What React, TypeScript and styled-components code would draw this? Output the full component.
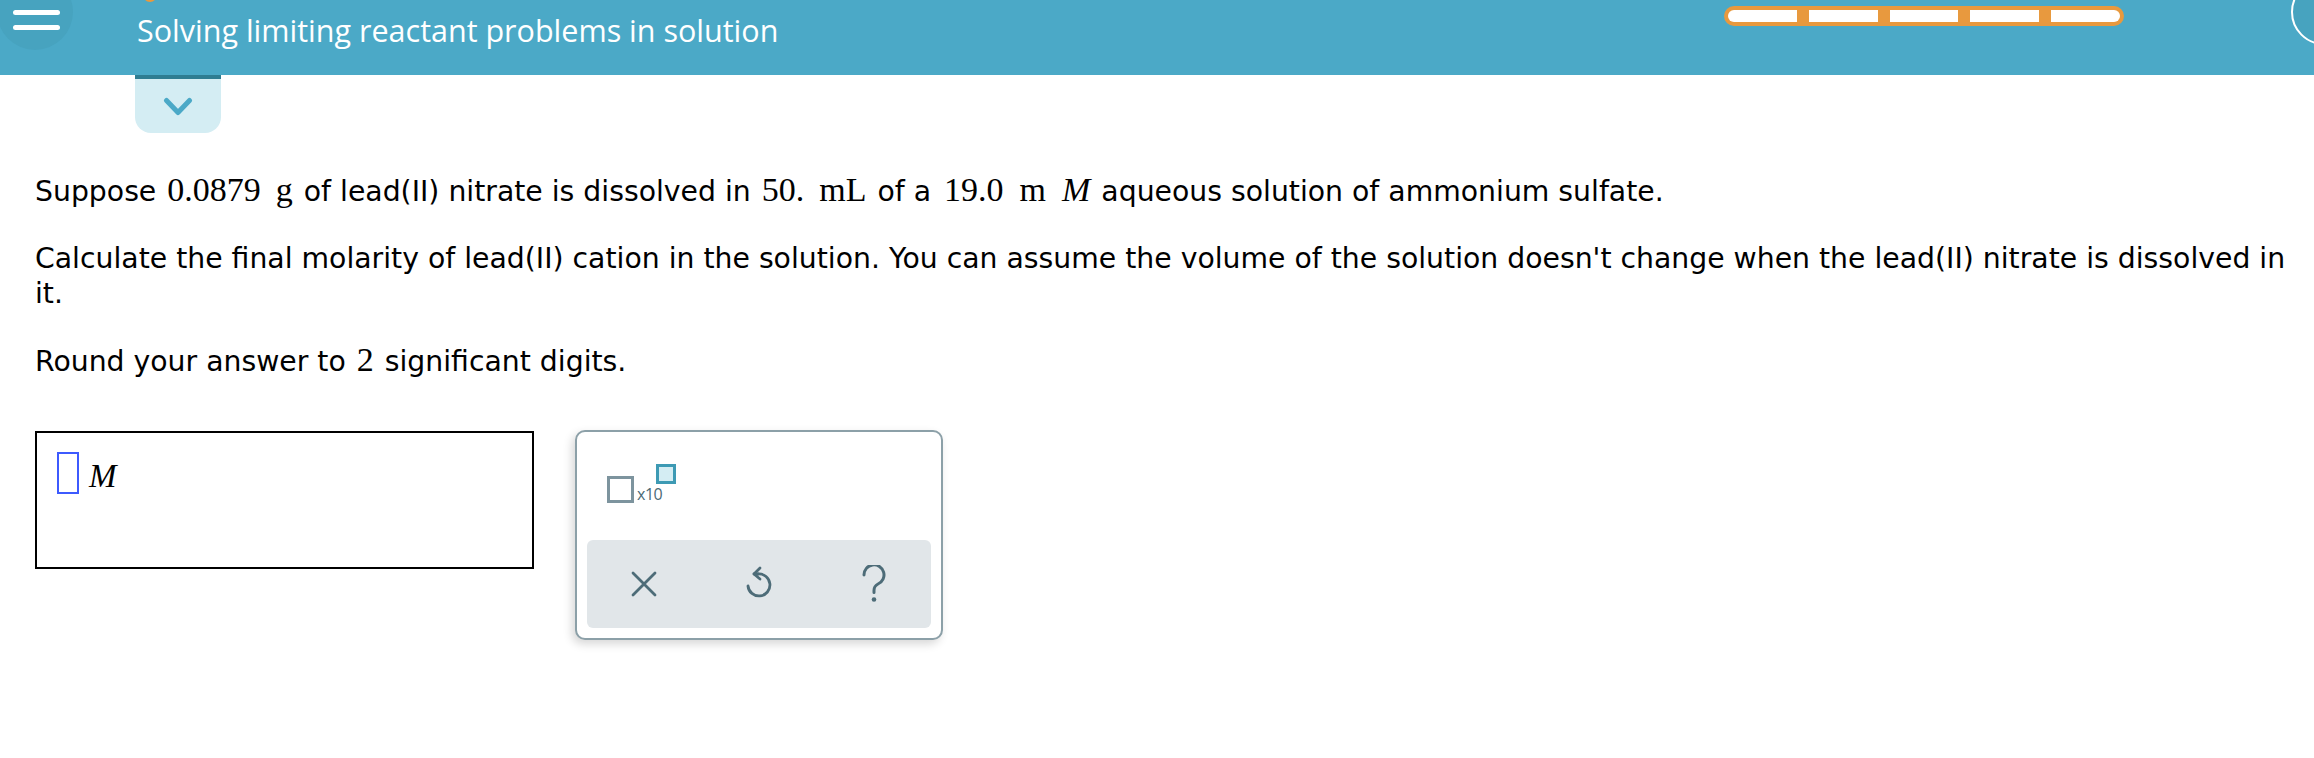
import React from 'react';
import styled, { createGlobalStyle } from 'styled-components';

const GlobalStyle = createGlobalStyle`
  html, body {
    margin: 0;
    padding: 0;
    background: #fff;
  }
  body {
    width: 2314px;
    height: 758px;
    overflow: hidden;
    font-family: "DejaVu Sans", Verdana, sans-serif;
    color: #000;
  }
`;

const Header = styled.header`
  display: flex;
  align-items: flex-start;
  height: 75px;
  background: #4ba9c7;
  overflow: hidden;
`;

const MenuButton = styled.div`
  flex: none;
  width: 76px;
  height: 76px;
  margin: -26px 0 0 -3px;
  border-radius: 50%;
  background: #47a3bf;
  display: flex;
  flex-direction: column;
  align-items: center;
  justify-content: flex-end;
  gap: 10px;
  padding: 0 0 20px 3px;
  box-sizing: border-box;
`;

const MenuLine = styled.span`
  display: block;
  width: 47px;
  height: 5px;
  border-radius: 3px;
  background: #fff;
`;

const TitleBlock = styled.div`
  display: flex;
  flex-direction: column;
  margin-left: 64px;
`;

const Crumbs = styled.div`
  display: flex;
  align-items: flex-end;
  gap: 10px;
  height: 14px;
  margin-top: -12px;
  padding-left: 6px;
  font-family: "Open Sans", sans-serif;
  font-size: 14px;
  color: #fff;
`;

const CrumbDot = styled.span`
  width: 14px;
  height: 14px;
  border-radius: 50%;
  background: #e8993e;
`;

const Title = styled.h1`
  margin: 11px 0 0;
  font-family: "Open Sans", sans-serif;
  font-weight: 400;
  font-size: 30.5px;
  line-height: 34px;
  color: #fff;
  white-space: nowrap;
`;

const Progress = styled.div`
  display: flex;
  gap: 12px;
  margin: 6px 0 0 auto;
  width: 400px;
  height: 20px;
  padding: 4px;
  box-sizing: border-box;
  border-radius: 10px;
  background: #e8993e;
  flex: none;
`;

const Segment = styled.span<{ $first?: boolean; $last?: boolean }>`
  flex: 1;
  background: #fff;
  border-radius: ${(p) => (p.$first ? '6px 0 0 6px' : p.$last ? '0 6px 6px 0' : '0')};
`;

const AccountCircle = styled.div`
  flex: none;
  width: 66px;
  height: 66px;
  margin: -21px -43px 0 167px;
  border: 2px solid #fff;
  border-radius: 50%;
  background: #47a3bf;
  box-sizing: border-box;
`;

const Tab = styled.div`
  display: flex;
  justify-content: center;
  width: 86px;
  height: 58px;
  margin-left: 135px;
  box-sizing: border-box;
  border-top: 4px solid #2f7d92;
  border-radius: 0 0 16px 16px;
  background: #d4edf3;
  padding-top: 18px;
`;

const Main = styled.main`
  padding: 40px 0 0 35px;
  width: 2275px;
`;

const Para = styled.p`
  margin: 0 0 32px;
  font-size: 28.3px;
  line-height: 35px;
`;

const MathText = styled.span<{ $italic?: boolean; $gap?: number; $lead?: number }>`
  font-family: "Liberation Serif", "Times New Roman", serif;
  font-size: 34px;
  line-height: 1;
  font-style: ${(p) => (p.$italic ? 'italic' : 'normal')};
  margin-left: ${(p) => p.$lead ?? 2}px;
  margin-right: ${(p) => p.$gap ?? 2}px;
`;

const AnswerRow = styled.div`
  display: flex;
  align-items: flex-start;
  margin-top: 52px;
`;

const AnswerBox = styled.div`
  display: flex;
  align-items: flex-start;
  gap: 10px;
  width: 499px;
  height: 138px;
  box-sizing: border-box;
  border: 2px solid #000;
  padding: 19px 0 0 20px;
`;

const Cursor = styled.span`
  width: 22px;
  height: 42px;
  box-sizing: border-box;
  border: 2px solid #3d5afe;
`;

const Unit = styled.span`
  font-family: "Liberation Serif", "Times New Roman", serif;
  font-style: italic;
  font-size: 33px;
  line-height: 1;
  margin-top: 8px;
`;

const Keypad = styled.div`
  display: flex;
  flex-direction: column;
  width: 368px;
  height: 210px;
  margin: -1px 0 0 41px;
  box-sizing: border-box;
  border: 2px solid #8ca0a8;
  border-radius: 10px;
  padding: 10px;
  background: #fff;
  box-shadow: -3px 4px 10px rgba(0, 0, 0, 0.16);
`;

const KeyTop = styled.div`
  flex: 1;
  padding: 22px 0 0 20px;
`;

const PowerKey = styled.div`
  display: inline-flex;
  align-items: flex-start;
`;

const BaseSquare = styled.span`
  width: 27px;
  height: 27px;
  margin-top: 12px;
  box-sizing: border-box;
  border: 3px solid #7d949e;
`;

const PowerLabel = styled.span`
  margin: 22px 0 0 3px;
  font-family: "Open Sans", sans-serif;
  font-size: 16px;
  line-height: 16px;
  letter-spacing: -0.5px;
  color: #4a6a76;
`;

const SupSquare = styled.span`
  width: 20px;
  height: 20px;
  margin-left: -6px;
  box-sizing: border-box;
  border: 3px solid #3d9ab4;
  background: #d4edf3;
`;

const KeyBar = styled.div`
  display: flex;
  height: 88px;
  border-radius: 6px;
  background: #e1e6e9;
`;

const KeyButton = styled.div`
  flex: 1;
  display: flex;
  align-items: center;
  justify-content: center;
  color: #4d6c78;
`;

const Chevron = () => (
  <svg width="30" height="19" viewBox="0 0 30 19">
    <path d="M3.5 3.5 L15 15.5 L26.5 3.5" fill="none" stroke="#4ba9c7" strokeWidth="5" strokeLinecap="round" strokeLinejoin="round" />
  </svg>
);

const ClearIcon = () => (
  <svg width="26" height="26" viewBox="0 0 26 26">
    <path d="M2 2 L24 24 M24 2 L2 24" stroke="currentColor" strokeWidth="2.8" strokeLinecap="round" />
  </svg>
);

const UndoIcon = () => (
  <svg width="30" height="36" viewBox="0 0 30 36">
    <path d="M14 8 A11 11 0 1 1 4 20" fill="none" stroke="currentColor" strokeWidth="2.8" strokeLinecap="round" />
    <path d="M16 2 L10 8 L16 13" fill="none" stroke="currentColor" strokeWidth="2.8" strokeLinecap="round" strokeLinejoin="round" />
    <path d="M10 8 H14" fill="none" stroke="currentColor" strokeWidth="2.8" strokeLinecap="round" />
  </svg>
);

const HelpIcon = () => (
  <svg width="26" height="38" viewBox="0 0 26 38">
    <path d="M3 10 A10 10 0 1 1 17 19 C14 20.5 13 22.5 13 25.5 V27.5" fill="none" stroke="currentColor" strokeWidth="3" strokeLinecap="round" />
    <circle cx="13" cy="34.5" r="2.3" fill="currentColor" />
  </svg>
);

const App = () => {
  return (
    <>
      <GlobalStyle />
      <Header>
        <MenuButton>
          <MenuLine />
          <MenuLine />
          <MenuLine />
        </MenuButton>
        <TitleBlock>
          <Crumbs>
            <CrumbDot />
            <span>Chemical Reactions</span>
          </Crumbs>
          <Title>Solving limiting reactant problems in solution</Title>
        </TitleBlock>
        <Progress>
          <Segment $first />
          <Segment />
          <Segment />
          <Segment />
          <Segment $last />
        </Progress>
        <AccountCircle />
      </Header>
      <Tab>
        <Chevron />
      </Tab>
      <Main>
        <Para>
          Suppose <MathText $gap={13}>0.0879</MathText><MathText>g</MathText> of lead(II) nitrate is dissolved in{' '}
          <MathText $gap={13}>50.</MathText><MathText>mL</MathText> of a <MathText $lead={4} $gap={14}>19.0</MathText>
          <MathText $gap={14}>m</MathText><MathText $italic>M</MathText> aqueous solution of ammonium sulfate.
        </Para>
        <Para>
          Calculate the final molarity of lead(II) cation in the solution. You can assume the volume of the solution
          doesn't change when the lead(II) nitrate is dissolved in it.
        </Para>
        <Para>
          Round your answer to <MathText>2</MathText> significant digits.
        </Para>
        <AnswerRow>
          <AnswerBox>
            <Cursor />
            <Unit>M</Unit>
          </AnswerBox>
          <Keypad>
            <KeyTop>
              <PowerKey>
                <BaseSquare />
                <PowerLabel>x10</PowerLabel>
                <SupSquare />
              </PowerKey>
            </KeyTop>
            <KeyBar>
              <KeyButton>
                <ClearIcon />
              </KeyButton>
              <KeyButton>
                <UndoIcon />
              </KeyButton>
              <KeyButton>
                <HelpIcon />
              </KeyButton>
            </KeyBar>
          </Keypad>
        </AnswerRow>
      </Main>
    </>
  );
};

export default App;
